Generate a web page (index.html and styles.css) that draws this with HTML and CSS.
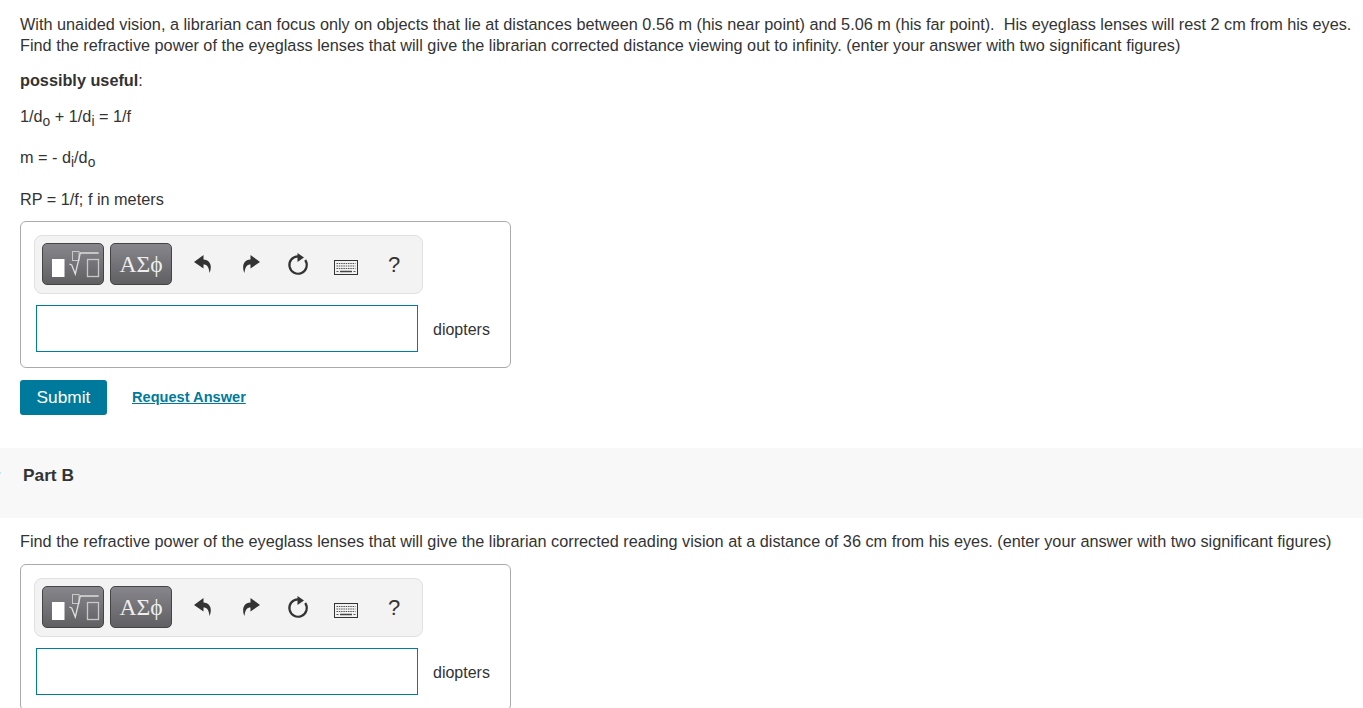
FILE: index.html
```html
<!DOCTYPE html>
<html lang="en">

<head>
    <meta charset="UTF-8">
    <meta name="viewport" content="width=device-width, initial-scale=1.0">
    <title>Part A</title>
    <link rel="stylesheet" href="styles.css">
</head>

<body>
    <svg class="defs" width="0" height="0">
        <symbol id="i-tpl" viewBox="0 0 62 42">
            <rect x="10" y="16" width="12.500" height="18" fill="#fff" />
            <rect x="30.500" y="8.500" width="6.500" height="9" fill="none" stroke="#c8c8c8" />
            <path d="M27.300 21l2.400 1 3.600 9 5-21h18.400" fill="none" stroke="#ddd" stroke-width="1.300" />
            <rect x="45.500" y="16.500" width="11" height="17" fill="none" stroke="#c8c8c8" stroke-width="1.300" />
        </symbol>
        <symbol id="i-undo" viewBox="0 0 20 20">
            <path d="M10.500 1 1 8l9.500 6.500v-4c3.500 0 5.500 2.500 6 8.500 2.500-5 2-13-6-13.500z" fill="#333" />
        </symbol>
        <symbol id="i-redo" viewBox="0 0 20 20">
            <path d="M9.500 1 19 8l-9.500 6.500v-4c-3.500 0-5.500 2.500-6 8.500-2.500-5-2-13 6-13.500z" fill="#333" />
        </symbol>
        <symbol id="i-reset" viewBox="0 0 24 24">
            <path d="M12 4.300A8.700 8.700 0 1 0 19.200 8" fill="none" stroke="#333" stroke-width="2.200" />
            <path d="M11.500 1 18 5.500 11.500 10z" fill="#333" />
        </symbol>
        <symbol id="i-keys" viewBox="0 0 24 15">
            <rect x="0.500" y="0.500" width="23" height="14" fill="#f2f2f2" stroke="#333" />
            <path d="M2.500 3.500h19M2.500 6h19M2.500 8.500h19" stroke="#555" stroke-dasharray="1.500 .8" />
            <path d="M6 11.500h12" stroke="#444" stroke-width="1.500" />
            <path d="M2.500 11.500h2M19.500 11.500h2" stroke="#555" />
        </symbol>
    </svg>

    <div class="question">
        <p class="intro">With unaided vision, a librarian can focus only on objects that lie at distances between 0.56 m (his near point) and 5.06 m (his far point).&nbsp; His eyeglass lenses will rest 2 cm from his eyes.&nbsp; Find the refractive power of the eyeglass lenses that will give the librarian corrected distance viewing out to infinity. (enter your answer with two significant figures)</p>
        <p class="useful"><b>possibly useful</b>:</p>
        <p>1/d<sub>o</sub> + 1/d<sub>i</sub> = 1/f</p>
        <p>m = - d<sub>i</sub>/d<sub>o</sub></p>
        <p>RP = 1/f; f in meters</p>

        <div class="answer">
            <div class="toolbar">
                <button class="tpl"><svg width="62" height="42"><use href="#i-tpl" /></svg></button>
                <button class="sym">ΑΣϕ</button>
                <span class="tool undo"><svg width="20" height="20"><use href="#i-undo" /></svg></span>
                <span class="tool redo"><svg width="20" height="20"><use href="#i-redo" /></svg></span>
                <span class="tool reset"><svg width="24" height="24"><use href="#i-reset" /></svg></span>
                <span class="tool keys"><svg width="24" height="15"><use href="#i-keys" /></svg></span>
                <span class="tool help">?</span>
            </div>
            <div class="entry">
                <div class="field"></div>
                <span class="unit">diopters</span>
            </div>
        </div>

        <div class="actions">
            <button class="submit">Submit</button>
            <a class="request" href="#">Request Answer</a>
        </div>
    </div>

    <div class="part-head"><h3>Part B</h3></div>

    <div class="question second">
        <p>Find the refractive power of the eyeglass lenses that will give the librarian corrected reading vision at a distance of 36 cm from his eyes. (enter your answer with two significant figures)</p>

        <div class="answer">
            <div class="toolbar">
                <button class="tpl"><svg width="62" height="42"><use href="#i-tpl" /></svg></button>
                <button class="sym">ΑΣϕ</button>
                <span class="tool undo"><svg width="20" height="20"><use href="#i-undo" /></svg></span>
                <span class="tool redo"><svg width="20" height="20"><use href="#i-redo" /></svg></span>
                <span class="tool reset"><svg width="24" height="24"><use href="#i-reset" /></svg></span>
                <span class="tool keys"><svg width="24" height="15"><use href="#i-keys" /></svg></span>
                <span class="tool help">?</span>
            </div>
            <div class="entry">
                <div class="field"></div>
                <span class="unit">diopters</span>
            </div>
        </div>
    </div>
</body>

</html>
```

FILE: styles.css
```css
html,
body {
    margin: 0;
    height: 708px;
    overflow: hidden;
    background: #fff;
}

body {
    font-family: "Liberation Sans", Arial, sans-serif;
    font-size: 16.25px;
    line-height: 21px;
    color: #333;
}

.defs {
    position: absolute;
}

.question {
    padding: 14px 0 0 20px;
}

.question p {
    margin: 0 0 20.400px;
    height: 21px;
}

.question p.intro {
    height: 42px;
    margin-bottom: 14px;
}

.question p.useful {
    margin-bottom: 15px;
}

sub {
    font-size: 85%;
    line-height: 0;
    vertical-align: -4px;
}

.answer {
    box-sizing: border-box;
    width: 491px;
    height: 147px;
    margin-top: -9px;
    padding: 13px 0 0 13px;
    border: 1px solid #aaa;
    border-radius: 6px;
}

.toolbar {
    box-sizing: border-box;
    display: flex;
    align-items: center;
    width: 389px;
    height: 59px;
    padding: 0 0 1px 7px;
    background: #f3f3f3;
    border: 1px solid #e0e0e0;
    border-radius: 8px;
}

.tpl,
.sym {
    box-sizing: border-box;
    height: 42px;
    padding: 0;
    border: 1px solid #444;
    border-radius: 5px;
    background: linear-gradient(#87868c, #606063);
    color: #eee;
}

.tpl {
    width: 62px;
    margin-right: 6px;
    overflow: hidden;
}

.tpl svg {
    display: block;
    margin: -1px;
}

.sym {
    width: 62px;
    font-family: "Liberation Serif", "DejaVu Serif", serif;
    font-size: 23.500px;
}

.tool {
    display: flex;
    justify-content: center;
    width: 24px;
}

.undo {
    margin-left: 19px;
}

.redo {
    margin-left: 24px;
}

.reset {
    margin-left: 23px;
}

.keys {
    margin-left: 24px;
    margin-top: 6px;
}

.help {
    margin-left: 24px;
    font-size: 22px;
}

.entry {
    display: flex;
    align-items: center;
    margin-top: 11px;
    margin-left: 2px;
}

.field {
    box-sizing: border-box;
    width: 382px;
    height: 47px;
    border: 1px solid #007c9c;
}

.unit {
    margin-left: 15px;
    padding-top: 2px;
    font-size: 16px;
}

.actions {
    display: flex;
    align-items: center;
    margin-top: 12px;
}

.submit {
    width: 87px;
    height: 35px;
    padding: 0;
    border: 0;
    border-radius: 3px;
    background: #007a9c;
    color: #fff;
    font-family: inherit;
    font-size: 17.300px;
}

.request {
    margin-left: 25px;
    color: #007a9c;
    font-size: 14.600px;
    font-weight: bold;
}

.part-head {
    position: relative;
    box-sizing: border-box;
    height: 69.500px;
    margin-top: 33px;
    padding: 17px 0 0 23px;
    background: #f8f8f8;
}

.part-head::before {
    content: "";
    position: absolute;
    left: 0;
    top: 24px;
    width: 1px;
    height: 2px;
    background: #bfe9f5;
}

.part-head h3 {
    margin: 0;
    font-size: 17.300px;
    line-height: 21px;
}

.second {
    padding-top: 13.500px;
}

.second .answer {
    margin-top: 0;
}

.second p {
    margin-bottom: 12px;
}
```
